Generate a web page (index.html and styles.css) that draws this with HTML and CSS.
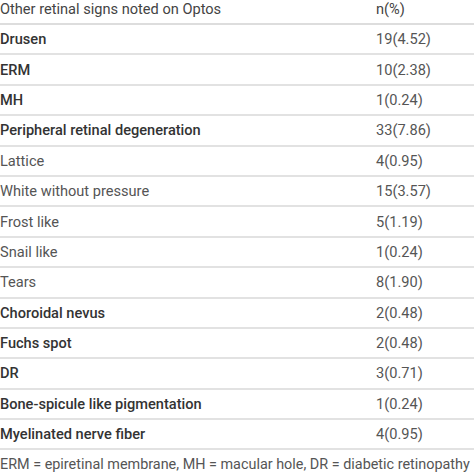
FILE: index.html
```html
<!DOCTYPE html>
<html>
<head>
<meta charset="utf-8">
<link rel="stylesheet" href="styles.css">
</head>
<body>
<table class="tbl">
<colgroup><col class="c1"><col class="c2"></colgroup>
<thead>
<tr><th>Other retinal signs noted on Optos</th><th>n(%)</th></tr>
</thead>
<tbody>
<tr><td class="b">Drusen</td><td>19(4.52)</td></tr>
<tr><td class="b">ERM</td><td>10(2.38)</td></tr>
<tr><td class="b">MH</td><td>1(0.24)</td></tr>
<tr><td class="b">Peripheral retinal degeneration</td><td>33(7.86)</td></tr>
<tr><td>Lattice</td><td>4(0.95)</td></tr>
<tr><td>White without pressure</td><td>15(3.57)</td></tr>
<tr><td>Frost like</td><td>5(1.19)</td></tr>
<tr><td>Snail like</td><td>1(0.24)</td></tr>
<tr><td>Tears</td><td>8(1.90)</td></tr>
<tr><td class="b">Choroidal nevus</td><td>2(0.48)</td></tr>
<tr><td class="b">Fuchs spot</td><td>2(0.48)</td></tr>
<tr><td class="b">DR</td><td>3(0.71)</td></tr>
<tr><td class="b">Bone-spicule like pigmentation</td><td>1(0.24)</td></tr>
<tr><td class="b">Myelinated nerve fiber</td><td>4(0.95)</td></tr>
</tbody>
</table>
<div class="note">ERM = epiretinal membrane, MH = macular hole, DR = diabetic retinopathy</div>
</body>
</html>
```
FILE: styles.css
```css
html, body { margin: 0; padding: 0; background: #fff; }
body { font-family: Roboto, "Liberation Sans", sans-serif; font-size: 14.6px; color: #555; width: 474px; overflow: hidden; }
.tbl { border-collapse: collapse; width: 474px; table-layout: fixed; }
.c1 { width: 376px; }
.c2 { width: 98px; }
.tbl th { font-weight: 400; text-align: left; color: #444; height: 23px; padding: 0; border-bottom: 2px solid #ddd; vertical-align: top; white-space: nowrap; }
.tbl td { height: 28.4px; padding: 0; border-bottom: 2px solid #e2e2e2; vertical-align: middle; white-space: nowrap; }
.tbl td.b { font-weight: 500; color: #333; }
.note { padding-top: 6px; white-space: nowrap; color: #555; font-size: 14.4px; }
```
